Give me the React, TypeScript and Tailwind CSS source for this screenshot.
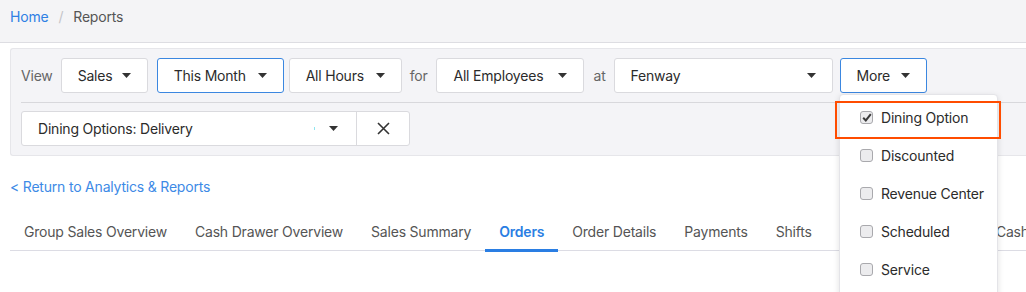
import React from "react";

const Caret = () => (
  <svg width="9" height="5" viewBox="0 0 9 5" className="shrink-0">
    <path d="M0 0h9L4.5 5z" fill="#333" />
  </svg>
);

function Select({
  label,
  width,
  active,
  className = "",
}: {
  label: string;
  width: string;
  active?: boolean;
  className?: string;
}) {
  return (
    <div
      className={`${width} ${className} h-[35px] bg-white rounded-[3px] border flex items-center justify-between pl-[16px] pr-[16px] text-[#2b2b2b] ${
        active ? "border-[#3b87e0]" : "border-[#dadade]"
      }`}
    >
      <span>{label}</span>
      <Caret />
    </div>
  );
}

function Box({ checked }: { checked?: boolean }) {
  return (
    <span className="w-[13px] h-[13px] rounded-[3px] border border-[#a9a9ad] bg-[#ececee] flex items-center justify-center shrink-0">
      {checked && (
        <svg width="10" height="9" viewBox="0 0 10 9">
          <path d="M1.2 4.8L3.8 7.4L8.8 1.2" stroke="#3a3a3a" strokeWidth="2" fill="none" />
        </svg>
      )}
    </span>
  );
}

const tabs = [
  "Group Sales Overview",
  "Cash Drawer Overview",
  "Sales Summary",
  "Orders",
  "Order Details",
  "Payments",
  "Shifts",
  "Customer Summary",
  "Cash Activity",
];

const options = ["Dining Option", "Discounted", "Revenue Center", "Scheduled", "Service"];

export default function App() {
  return (
    <div className="relative w-[1026px] h-[292px] overflow-hidden bg-white text-[14px] tracking-[-0.2px] font-['Inter',sans-serif]">
      {/* breadcrumb */}
      <div className="h-[43px] bg-[#f4f4f6] border-b border-[#dddde2] pl-[10px] pt-[7px] leading-5 flex gap-[10px]">
        <span className="text-[#2f80e4]">Home</span>
        <span className="text-[#c4c4c8]">/</span>
        <span className="text-[#555]">Reports</span>
      </div>

      {/* filters */}
      <div className="mt-[5px] ml-[10px] bg-[#f4f4f7] border border-r-0 border-[#e6e6ea] rounded-l-[3px] pl-[10px] pt-[9px] pb-[9px]">
        <div className="flex items-center">
          <span className="text-[#666] mr-[8px]">View</span>
          <Select label="Sales" width="w-[87px]" />
          <Select label="This Month" width="w-[127px]" active className="ml-[9px]" />
          <Select label="All Hours" width="w-[113px]" className="ml-[5px]" />
          <span className="text-[#666] ml-[8px] mr-[9px]">for</span>
          <Select label="All Employees" width="w-[148px]" />
          <span className="text-[#666] ml-[9px] mr-[8px]">at</span>
          <Select label="Fenway" width="w-[219px]" />
          <Select label="More" width="w-[87px]" active className="ml-[7px]" />
        </div>
        <div className="h-px bg-[#d8d8dc] mt-[9px] mb-[8px]" />
        <div className="flex h-[35px] w-[389px] bg-white border border-[#dadade] rounded-[3px]">
          <div className="flex-1 flex items-center pl-[16px] pr-[18px] text-[#2b2b2b]">
            <span className="flex-1">Dining Options: Delivery</span>
            <span className="w-px h-[3px] bg-[#8fe6f0] mr-[14px]" />
            <Caret />
          </div>
          <div className="w-[53px] border-l border-[#dadade] flex items-center justify-center">
            <svg width="13" height="13" viewBox="0 0 13 13">
              <path d="M1 1L12 12M12 1L1 12" stroke="#333" strokeWidth="1.6" />
            </svg>
          </div>
        </div>
      </div>

      <div className="mt-[21px] pl-[10px] leading-5 text-[#3d8ae6]">&lt; Return to Analytics &amp; Reports</div>

      {/* tabs */}
      <div className="mt-[16px] ml-[10px] border-b border-[#dcdce4] flex whitespace-nowrap">
        {tabs.map((t) => (
          <div
            key={t}
            className={`px-[14px] h-[39px] flex items-center shrink-0 border-b-[3px] -mb-[2px] ${
              t === "Orders"
                ? "border-[#2a7ee3] text-[#2a7ee3] font-semibold"
                : "border-transparent text-[#555]"
            }`}
          >
            {t}
          </div>
        ))}
      </div>

      {/* dropdown */}
      <div className="absolute left-[839px] top-[94px] w-[159px] h-[220px] bg-white rounded-[4px] border border-[#e4e4e8] shadow-[0_2px_6px_rgba(0,0,0,0.12)] pt-[3px]">
        {options.map((o, i) => (
          <div key={o} className="h-[38px] flex items-center gap-[8px] pl-[20px] text-[#2b2b2b]">
            <Box checked={i === 0} />
            <span>{o}</span>
          </div>
        ))}
      </div>
      <div className="absolute left-[835px] top-[101px] w-[166px] h-[38px] border-2 border-[#ff4c00]" />
    </div>
  );
}
